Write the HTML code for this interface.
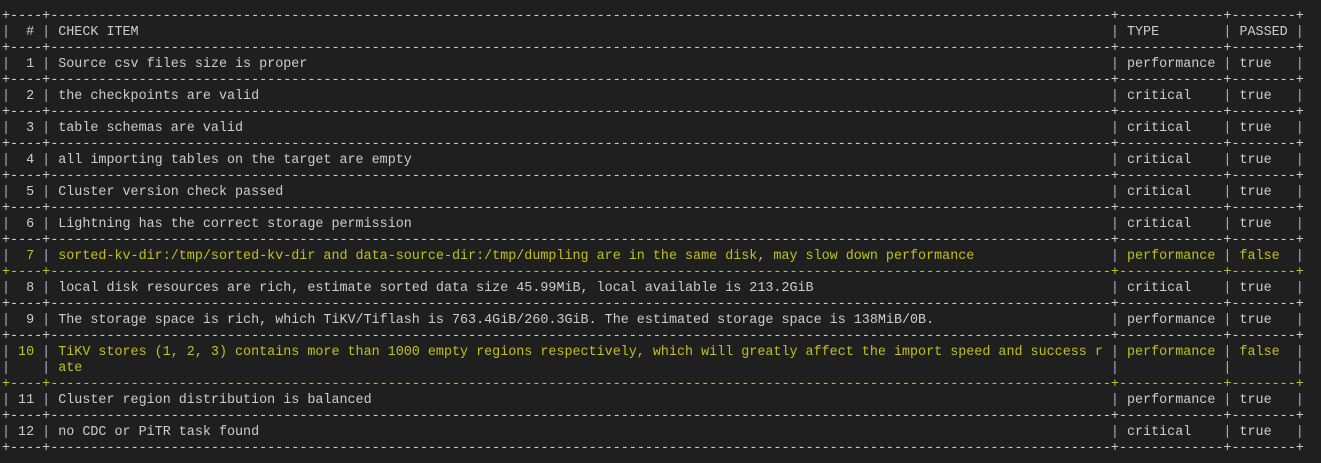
<!DOCTYPE html>
<html><head><meta charset="utf-8"><style>
html,body{margin:0;padding:0;background:#1f1f1f;width:1321px;height:463px;overflow:hidden}
#t{position:absolute;left:2px;top:9px;font-family:"Liberation Mono","DejaVu Sans Mono",monospace;font-size:13.4px;color:#cccccc}
.l{position:relative;height:16px;line-height:16px;width:1300px}
.l span{position:absolute;top:0;white-space:pre}
.b{left:0;overflow:hidden;width:162ch}
.a{left:0}.n{left:1ch;width:3ch;text-align:right}.c{left:5ch}.x{left:7ch}.d{left:138ch}.ty{left:140ch}.e{left:152ch}.ps{left:154ch}.f{left:161ch}
.pp{color:#a8b4c0}
.y{color:#c0c020}
</style></head><body><div id="t"><div class="l"><span class="b">+----+------------------------------------------------------------------------------------------------------------------------------------+-------------+--------+</span></div><div class="l"><span class="a pp">|</span><span class="n">#</span><span class="c pp">|</span><span class="x">CHECK ITEM</span><span class="d pp">|</span><span class="ty">TYPE</span><span class="e pp">|</span><span class="ps">PASSED</span><span class="f pp">|</span></div><div class="l"><span class="b">+----+------------------------------------------------------------------------------------------------------------------------------------+-------------+--------+</span></div><div class="l"><span class="a pp">|</span><span class="n">1</span><span class="c pp">|</span><span class="x">Source csv files size is proper</span><span class="d pp">|</span><span class="ty">performance</span><span class="e pp">|</span><span class="ps">true</span><span class="f pp">|</span></div><div class="l"><span class="b">+----+------------------------------------------------------------------------------------------------------------------------------------+-------------+--------+</span></div><div class="l"><span class="a pp">|</span><span class="n">2</span><span class="c pp">|</span><span class="x">the checkpoints are valid</span><span class="d pp">|</span><span class="ty">critical</span><span class="e pp">|</span><span class="ps">true</span><span class="f pp">|</span></div><div class="l"><span class="b">+----+------------------------------------------------------------------------------------------------------------------------------------+-------------+--------+</span></div><div class="l"><span class="a pp">|</span><span class="n">3</span><span class="c pp">|</span><span class="x">table schemas are valid</span><span class="d pp">|</span><span class="ty">critical</span><span class="e pp">|</span><span class="ps">true</span><span class="f pp">|</span></div><div class="l"><span class="b">+----+------------------------------------------------------------------------------------------------------------------------------------+-------------+--------+</span></div><div class="l"><span class="a pp">|</span><span class="n">4</span><span class="c pp">|</span><span class="x">all importing tables on the target are empty</span><span class="d pp">|</span><span class="ty">critical</span><span class="e pp">|</span><span class="ps">true</span><span class="f pp">|</span></div><div class="l"><span class="b">+----+------------------------------------------------------------------------------------------------------------------------------------+-------------+--------+</span></div><div class="l"><span class="a pp">|</span><span class="n">5</span><span class="c pp">|</span><span class="x">Cluster version check passed</span><span class="d pp">|</span><span class="ty">critical</span><span class="e pp">|</span><span class="ps">true</span><span class="f pp">|</span></div><div class="l"><span class="b">+----+------------------------------------------------------------------------------------------------------------------------------------+-------------+--------+</span></div><div class="l"><span class="a pp">|</span><span class="n">6</span><span class="c pp">|</span><span class="x">Lightning has the correct storage permission</span><span class="d pp">|</span><span class="ty">critical</span><span class="e pp">|</span><span class="ps">true</span><span class="f pp">|</span></div><div class="l"><span class="b">+----+------------------------------------------------------------------------------------------------------------------------------------+-------------+--------+</span></div><div class="l y"><span class="a pp">|</span><span class="n">7</span><span class="c pp">|</span><span class="x">sorted-kv-dir:/tmp/sorted-kv-dir and data-source-dir:/tmp/dumpling are in the same disk, may slow down performance</span><span class="d pp">|</span><span class="ty">performance</span><span class="e pp">|</span><span class="ps">false</span><span class="f pp">|</span></div><div class="l y"><span class="b">+----+------------------------------------------------------------------------------------------------------------------------------------+-------------+--------+</span></div><div class="l"><span class="a pp">|</span><span class="n">8</span><span class="c pp">|</span><span class="x">local disk resources are rich, estimate sorted data size 45.99MiB, local available is 213.2GiB</span><span class="d pp">|</span><span class="ty">critical</span><span class="e pp">|</span><span class="ps">true</span><span class="f pp">|</span></div><div class="l"><span class="b">+----+------------------------------------------------------------------------------------------------------------------------------------+-------------+--------+</span></div><div class="l"><span class="a pp">|</span><span class="n">9</span><span class="c pp">|</span><span class="x">The storage space is rich, which TiKV/Tiflash is 763.4GiB/260.3GiB. The estimated storage space is 138MiB/0B.</span><span class="d pp">|</span><span class="ty">performance</span><span class="e pp">|</span><span class="ps">true</span><span class="f pp">|</span></div><div class="l"><span class="b">+----+------------------------------------------------------------------------------------------------------------------------------------+-------------+--------+</span></div><div class="l y"><span class="a pp">|</span><span class="n">10</span><span class="c pp">|</span><span class="x">TiKV stores (1, 2, 3) contains more than 1000 empty regions respectively, which will greatly affect the import speed and success r</span><span class="d pp">|</span><span class="ty">performance</span><span class="e pp">|</span><span class="ps">false</span><span class="f pp">|</span></div><div class="l y"><span class="a pp">|</span><span class="c pp">|</span><span class="x">ate</span><span class="d pp">|</span><span class="e pp">|</span><span class="f pp">|</span></div><div class="l y"><span class="b">+----+------------------------------------------------------------------------------------------------------------------------------------+-------------+--------+</span></div><div class="l"><span class="a pp">|</span><span class="n">11</span><span class="c pp">|</span><span class="x">Cluster region distribution is balanced</span><span class="d pp">|</span><span class="ty">performance</span><span class="e pp">|</span><span class="ps">true</span><span class="f pp">|</span></div><div class="l"><span class="b">+----+------------------------------------------------------------------------------------------------------------------------------------+-------------+--------+</span></div><div class="l"><span class="a pp">|</span><span class="n">12</span><span class="c pp">|</span><span class="x">no CDC or PiTR task found</span><span class="d pp">|</span><span class="ty">critical</span><span class="e pp">|</span><span class="ps">true</span><span class="f pp">|</span></div><div class="l"><span class="b">+----+------------------------------------------------------------------------------------------------------------------------------------+-------------+--------+</span></div></div></body></html>
